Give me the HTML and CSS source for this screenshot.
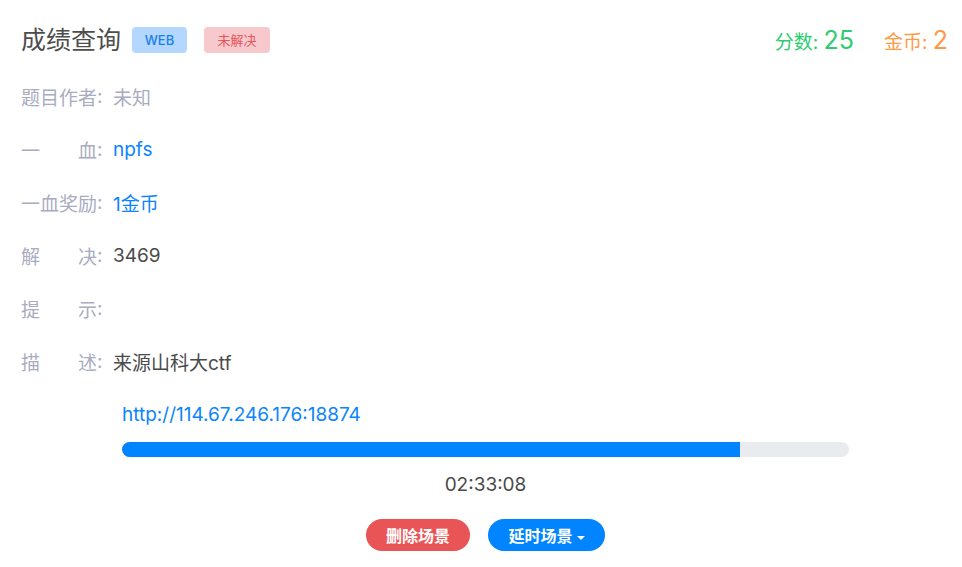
FILE: index.html
```html
<!DOCTYPE html>
<html lang="zh-CN">
<head>
  <meta charset="UTF-8" />
  <meta name="viewport" content="width=device-width, initial-scale=1.0" />
  <title>成绩查询</title>
  <link rel="stylesheet" href="styles.css">
</head>
<body>
  <div class="container">
    <div class="header">
      <div class="title-box">
        <h2 class="title">成绩查询</h2>
        <span class="badge badge-web">WEB</span>
        <span class="badge badge-todo">未解决</span>
      </div>
      <div class="stats">
        <span class="stat score">分数: <b>25</b></span>
        <span class="stat coin">金币: <b>2</b></span>
      </div>
    </div>

    <div class="info">
      <div class="row"><span class="label">题目作者</span><span class="colon">:</span><span class="value muted">未知</span></div>
      <div class="row"><span class="label">一血</span><span class="colon">:</span><span class="value link">npfs</span></div>
      <div class="row"><span class="label">一血奖励</span><span class="colon">:</span><span class="value link">1金币</span></div>
      <div class="row"><span class="label">解决</span><span class="colon">:</span><span class="value">3469</span></div>
      <div class="row"><span class="label">提示</span><span class="colon">:</span><span class="value"></span></div>
      <div class="row"><span class="label">描述</span><span class="colon">:</span><span class="value">来源山科大ctf</span></div>
    </div>

    <div class="scene">
      <a class="url" href="#">http://114.67.246.176:18874</a>
      <div class="progress">
        <div class="progress-bar" style="width: 85%;"></div>
      </div>
      <div class="timer">02:33:08</div>
      <div class="actions">
        <button class="btn btn-red">删除场景</button>
        <button class="btn btn-blue">延时场景<span class="caret"></span></button>
      </div>
    </div>
  </div>
</body>
</html>
```

FILE: styles.css
```css
body {
  margin: 0;
  background-color: #fff;
  font-family: Inter, "Noto Sans CJK SC", sans-serif;
  color: #4a4a4a;
}
.container {
  padding: 24px 14px 0 21px;
}
.header {
  display: flex;
  justify-content: space-between;
  align-items: center;
  height: 32px;
}
.title-box {
  display: flex;
  align-items: center;
}
.title {
  margin: 0;
  font-size: 25px;
  font-weight: normal;
  color: #4d4d4d;
  line-height: 32px;
}
.badge {
  display: inline-block;
  height: 26px;
  line-height: 26px;
  border-radius: 4px;
  font-size: 13px;
  text-align: center;
}
.badge-web {
  margin-left: 11px;
  width: 55px;
  background-color: #b3d7ff;
  color: #1a7fe6;
  font-weight: 500;
}
.badge-todo {
  margin-left: 17px;
  width: 66px;
  background-color: #f8c9cc;
  color: #e5545a;
}
.stats {
  display: flex;
  align-items: baseline;
  gap: 30px;
}
.stat {
  font-size: 19px;
}
.stat b {
  font-size: 25px;
  font-weight: normal;
}
.score {
  color: #2dcc70;
}
.coin {
  color: #fd9a47;
}
.info {
  margin-top: 14px;
}
.row {
  display: flex;
  align-items: center;
  height: 53px;
  font-size: 19px;
}
.label {
  width: 76px;
  color: #a9acc0;
  text-align: justify;
  text-align-last: justify;
}
.colon {
  color: #a9acc0;
  width: 16px;
}
.value {
  color: #4a4a4a;
}
.value.muted {
  color: #a9acc0;
}
.value.link {
  color: #0a84ff;
}
.scene {
  width: 727px;
  margin-left: 101px;
  margin-top: 14px;
}
.url {
  display: block;
  font-size: 19px;
  line-height: 26px;
  color: #0a84ff;
  text-decoration: none;
}
.progress {
  margin-top: 14px;
  height: 15px;
  border-radius: 8px;
  background-color: #e9ecef;
  overflow: hidden;
}
.progress-bar {
  height: 100%;
  background-color: #0084ff;
}
.timer {
  margin-top: 15px;
  text-align: center;
  font-size: 19px;
  line-height: 26px;
  color: #4a4a4a;
}
.actions {
  margin-top: 21px;
  display: flex;
  justify-content: center;
  gap: 18px;
}
.btn {
  height: 32px;
  border: none;
  border-radius: 16px;
  padding: 0 20px;
  color: #fff;
  font-family: Inter, "Noto Sans CJK SC", sans-serif;
  font-size: 16px;
  font-weight: bold;
  cursor: pointer;
}
.btn-red {
  width: 104px;
  background-color: #e95556;
}
.btn-blue {
  width: 117px;
  background-color: #0084ff;
}
.caret {
  display: inline-block;
  margin-left: 4px;
  vertical-align: middle;
  border-top: 4px solid #fff;
  border-left: 4px solid transparent;
  border-right: 4px solid transparent;
}
```
